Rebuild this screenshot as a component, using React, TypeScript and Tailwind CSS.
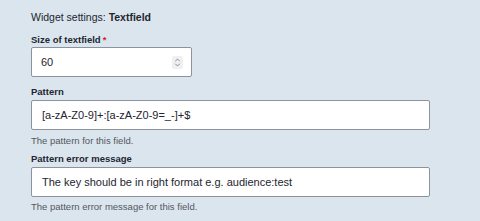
import React from "react";

export default function App() {
  return (
    <div className="w-[480px] h-[221px] bg-[#dae5ee] pl-[31px] pt-[10px] text-[#232530] font-['Liberation_Sans',Arial,sans-serif] overflow-hidden">
      {/* Heading */}
      <div className="text-[10.5px] leading-[14px]">
        Widget settings: <span className="font-bold">Textfield</span>
      </div>

      {/* Size of textfield */}
      <label className="block mt-[10px] text-[9.5px] leading-[12px] font-bold">
        Size of textfield<span className="text-[#d72222] ml-[2px]">*</span>
      </label>
      <div className="mt-[1px] w-[161px] h-[30px] bg-white border border-[#8e929c] rounded-[2px] flex items-center pl-[9px] pr-[8px]">
        <span className="flex-1 text-[11px]">60</span>
        <span className="w-[11px] h-[13px] bg-[#eef0f2] rounded-[2px] flex items-center justify-center">
          <svg width="7" height="11" viewBox="0 0 7 11" fill="none" stroke="#8a8d94" strokeWidth="1" strokeLinecap="round" strokeLinejoin="round">
            <path d="M1.5 4 L3.5 2 L5.5 4" />
            <path d="M1.5 7 L3.5 9 L5.5 7" />
          </svg>
        </span>
      </div>

      {/* Pattern */}
      <label className="block mt-[9px] text-[9.5px] leading-[12px] font-bold">Pattern</label>
      <div className="mt-[2px] w-[399px] h-[30px] bg-white border border-[#8e929c] rounded-[2px] flex items-center pl-[10px]">
        <span className="text-[11px]">[a-zA-Z0-9]+:[a-zA-Z0-9=_-]+$</span>
      </div>
      <p className="mt-[5px] text-[9.5px] leading-[12px] text-[#55575e]">The pattern for this field.</p>

      {/* Pattern error message */}
      <label className="block mt-[6px] text-[9.5px] leading-[12px] font-bold">Pattern error message</label>
      <div className="mt-[2px] w-[399px] h-[30px] bg-white border border-[#8e929c] rounded-[2px] flex items-center pl-[10px]">
        <span className="text-[11px]">The key should be in right format e.g. audience:test</span>
      </div>
      <p className="mt-[4px] text-[9.5px] leading-[12px] text-[#55575e]">The pattern error message for this field.</p>
    </div>
  );
}
